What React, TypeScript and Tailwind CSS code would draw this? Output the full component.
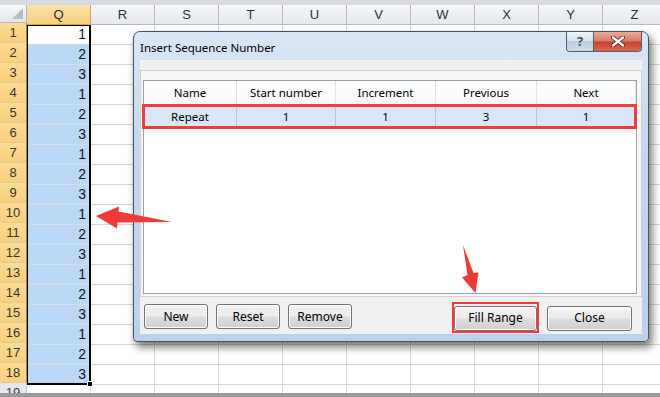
import React from 'react';

// Excel sheet behind a Kutools "Insert Sequence Number" dialog

const OTHER_COLS = ['R', 'S', 'T', 'U', 'V', 'W', 'X', 'Y', 'Z'];
const VALUES = [1, 2, 3, 1, 2, 3, 1, 2, 3, 1, 2, 3, 1, 2, 3, 1, 2, 3];
const ROWS = Array.from({ length: 19 }, (_, i) => i + 1);

const HeaderCell = ({ label, active }: { label: string; active?: boolean }) => (
  <div
    className={
      active
        ? 'h-[20px] flex items-center justify-center border-r border-b border-[#d7a44a] bg-[linear-gradient(#fbe3ad,#f8cf7c)] text-[13px] text-[#2b2b2b]'
        : 'h-[20px] flex items-center justify-center border-r border-b border-[#b4b9c0] bg-[linear-gradient(#f6f7f9,#e4e7eb)] text-[13px] text-[#27313d]'
    }
  >
    {label}
  </div>
);

const RowHeaders = () => (
  <div className="w-[27px] shrink-0 flex flex-col">
    <div className="h-[20px] border-r border-b border-[#b4b9c0] bg-[linear-gradient(#f6f7f9,#e4e7eb)] flex items-end justify-end p-[3px]">
      <svg width="11" height="11" viewBox="0 0 11 11">
        <polygon points="11,0 11,11 0,11" fill="#b9bdc3" />
      </svg>
    </div>
    {ROWS.map(r => (
      <div
        key={r}
        className={
          r <= 18
            ? 'h-[20px] shrink-0 flex items-center justify-center border-r border-b border-r-[#a08a64] border-b-[#e2c98f] bg-[linear-gradient(#fcdc95,#f9d07c)] text-[13px] text-[#3a3428]'
            : 'h-[20px] shrink-0 flex items-start justify-center pt-[2px] border-r border-b border-[#c5c9ce] bg-[#e4e7eb] text-[13px] leading-[16px] text-[#3a3f46]'
        }
      >
        {r}
      </div>
    ))}
  </div>
);

const QColumn = () => (
  <div className="w-[64px] shrink-0 flex flex-col relative">
    <HeaderCell label="Q" active />
    {ROWS.map(r => (
      <div
        key={r}
        className={
          'h-[20px] shrink-0 flex items-center justify-end pr-[4px] border-r border-b text-[14px] text-[#111] ' +
          (r === 1 ? 'bg-white border-[#d4d4d4]' : r <= 18 ? 'bg-[#bcd8f7] border-[#d9dde3]' : 'bg-white border-[#d4d4d4]')
        }
      >
        {r <= 18 ? VALUES[r - 1] : ''}
      </div>
    ))}
    {/* selection outline + fill handle */}
    <div className="absolute left-0 top-[20px] w-[64px] h-[360px] border-2 border-l border-t border-black pointer-events-none" />
    <div className="absolute left-[60px] top-[376px] w-[6px] h-[6px] bg-black border border-white" />
  </div>
);

const PlainColumn = ({ label }: { label: string }) => (
  <div className="w-[64px] shrink-0 flex flex-col">
    <HeaderCell label={label} />
    {ROWS.map(r => (
      <div key={r} className="h-[20px] shrink-0 border-r border-b border-[#d4d4d4] bg-white" />
    ))}
  </div>
);

const WinButton = ({ label, w }: { label: string; w: string }) => (
  <button
    className={`${w} h-[25px] rounded-[3px] border border-[#707070] bg-[linear-gradient(#f3f3f3,#ebebeb_48%,#dddddd_52%,#cfcfcf)] text-[12px] text-black shadow-[inset_0_0_0_1px_#fcfcfc]`}
  >
    {label}
  </button>
);

const COLUMNS = [
  { name: 'Name', w: 'w-[93px]', value: 'Repeat' },
  { name: 'Start number', w: 'w-[99px]', value: '1' },
  { name: 'Increment', w: 'w-[100px]', value: '1' },
  { name: 'Previous', w: 'w-[101px]', value: '3' },
  { name: 'Next', w: 'flex-1', value: '1' },
];

const Dialog = () => (
  <div className="absolute left-[133px] top-[31px] w-[516px] h-[311px] rounded-t-[7px] rounded-b-[4px] border border-[#445567] bg-[linear-gradient(#d9e6f5,#c3d7ee_40%,#bcd2ea)] shadow-[3px_5px_9px_rgba(0,0,0,0.55)] flex flex-col font-['Noto_Sans',sans-serif]">
    {/* title bar */}
    <div className="h-[28px] shrink-0 relative">
      <span className="absolute left-[6px] top-[7px] text-[11.5px] text-black">Insert Sequence Number</span>
      <div className="absolute left-[432px] top-0 h-[20px] flex rounded-b-[4px] border border-t-0 border-[#4d5e72] overflow-hidden">
        <div className="w-[27px] h-full flex items-center justify-center border-r border-[#4d5e72] bg-[linear-gradient(#eef3f9,#d5e0ec_50%,#bfcedf_50%,#cdd9e6)] text-[13px] font-bold text-[#46525f]">
          ?
        </div>
        <div className="w-[47px] h-full flex items-center justify-center bg-[linear-gradient(#eaa99b,#d98069_45%,#c7432f_55%,#d6694f)]">
          <svg width="14" height="11" viewBox="0 0 14 11">
            <path d="M2 1.5 L12 9.5 M12 1.5 L2 9.5" stroke="#5b1d13" strokeWidth="4" strokeLinecap="round" />
            <path d="M2 1.5 L12 9.5 M12 1.5 L2 9.5" stroke="#ffffff" strokeWidth="2.4" strokeLinecap="round" />
          </svg>
        </div>
      </div>
    </div>

    {/* client area */}
    <div className="mx-[6px] mb-[7px] flex-1 bg-[#f0f0f0] flex flex-col">
      <div className="mt-[10px] h-[227px] border border-[#d2d2d2] bg-[#f6f6f6] flex flex-col">
        <div className="ml-[2px] mt-[9px] w-[494px] h-[214px] border border-[#9aa0a8] bg-white relative">
          <div className="h-[24px] flex border-b border-[#eeeeee] bg-[linear-gradient(#ffffff,#f8f9fa)]">
            {COLUMNS.map(c => (
              <div key={c.name} className={`${c.w} flex items-center justify-center border-r border-[#e2e3e5] text-[11.5px] text-black`}>
                {c.name}
              </div>
            ))}
          </div>
          <div className="h-[21px] mt-[1px] flex bg-[#dae6f6]">
            {COLUMNS.map(c => (
              <div key={c.name} className={`${c.w} flex items-center justify-center border-r border-[#b9c3d1] text-[11.5px] text-black`}>
                {c.value}
              </div>
            ))}
          </div>
          {/* red highlight */}
          <div className="absolute left-[-2px] top-[23px] w-[495px] h-[25px] border-[3px] border-[#f23c3c]" />
        </div>
      </div>

      <div className="mt-[7px] flex pl-[4px] pr-[10px]">
        <div className="flex gap-[8px]">
          <WinButton label="New" w="w-[64px]" />
          <WinButton label="Reset" w="w-[64px]" />
          <WinButton label="Remove" w="w-[64px]" />
        </div>
        <div className="ml-auto relative">
          <WinButton label="Fill Range" w="w-[83px]" />
          <div className="absolute -inset-[2px] border-2 border-[#f23c3c]" />
        </div>
        <div className="ml-[10px]">
          <WinButton label="Close" w="w-[85px]" />
        </div>
      </div>
    </div>
  </div>
);

export default function App() {
  return (
    <div className="relative w-[660px] h-[397px] overflow-hidden bg-white font-['Liberation_Sans',Arial,sans-serif] flex flex-col">
      <div className="h-[5px] shrink-0 bg-[#d8dbdf]" />
      <div className="h-[388px] shrink-0 overflow-hidden flex">
        <RowHeaders />
        <QColumn />
        {OTHER_COLS.map(c => (
          <PlainColumn key={c} label={c} />
        ))}
      </div>
      <div className="flex-1 bg-[#9a9a9a]" />

      <Dialog />

      {/* red arrows */}
      <svg className="absolute inset-0 pointer-events-none" width="660" height="397" viewBox="0 0 660 397">
        <polygon points="172,222 118.5,211.5 119,206.5 96,216 117,228.5 117.5,222.5" fill="#f03a3a" />
        <polygon points="463,245 473.5,273 478.5,272.5 475.5,293 462,277.5 467.5,275" fill="#f03a3a" />
      </svg>
    </div>
  );
}
